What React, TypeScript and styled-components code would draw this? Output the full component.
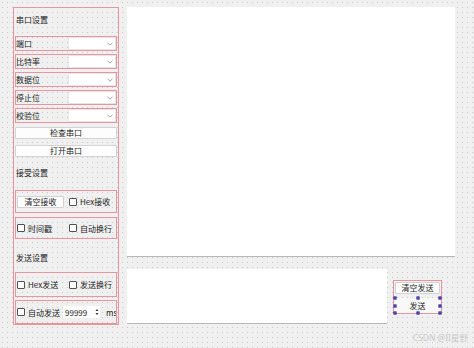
import React from 'react';
import styled, { createGlobalStyle } from 'styled-components';

const pink = '#e8959f';

const GlobalStyle = createGlobalStyle`
  html, body { margin: 0; padding: 0; }
  body {
    width: 474px;
    height: 348px;
    overflow: hidden;
    background-color: #f0f0f0;
    background-image: radial-gradient(circle, #c9c9c9 0.5px, transparent 0.8px);
    background-size: 5px 5px;
    background-position: 0 0;
    font-family: "Noto Sans CJK SC", "Noto Sans", sans-serif;
    font-size: 8px;
    color: #1c1c1c;
  }
`;

const Form = styled.div`
  position: relative;
  display: flex;
  gap: 8px;
  height: 348px;
  box-sizing: border-box;
  padding: 7px 0 0 13px;
`;

const Panel = styled.div`
  width: 106px;
  height: 318px;
  box-sizing: border-box;
  border: 1px solid ${pink};
  padding: 0 1px;
  display: flex;
  flex-direction: column;
`;

const SectionTitle = styled.div<{ $top: number }>`
  margin-top: ${p => p.$top}px;
  height: 12px;
  line-height: 12px;
  padding-left: 1px;
`;

const ComboRow = styled.div<{ $top: number }>`
  margin-top: ${p => p.$top}px;
  height: 15px;
  box-sizing: border-box;
  border: 1px solid ${pink};
  display: flex;
  align-items: stretch;
`;

const ComboLabel = styled.div`
  width: 52px;
  line-height: 13px;
`;

const ComboBox = styled.div`
  flex: 1;
  background: #fff;
  border: 1px solid #e6e6e6;
  display: flex;
  align-items: center;
  justify-content: flex-end;
  padding-right: 2px;
`;

const PushButton = styled.div<{ $top?: number; $w?: number; $h?: number }>`
  margin-top: ${p => p.$top ?? 0}px;
  ${p => (p.$w ? `width: ${p.$w}px;` : '')}
  height: ${p => p.$h ?? 12}px;
  box-sizing: border-box;
  background: #fdfdfd;
  border: 1px solid #d3d3d3;
  border-radius: 1px;
  display: flex;
  align-items: center;
  justify-content: center;
  line-height: 1;
`;

const OptionBox = styled.div<{ $top: number; $h: number }>`
  margin-top: ${p => p.$top}px;
  height: ${p => p.$h}px;
  box-sizing: border-box;
  border: 1px solid ${pink};
  display: grid;
  grid-template-columns: 52px 1fr;
  align-items: center;
  padding-left: 1px;
  overflow: hidden;
  white-space: nowrap;
`;

const CheckItem = styled.label`
  display: flex;
  align-items: center;
  gap: 3px;
`;

const CheckMark = styled.span`
  width: 8px;
  height: 8px;
  box-sizing: border-box;
  border: 1px solid #505050;
  border-radius: 1px;
  background: #fff;
`;

const SpinRow = styled.div`
  display: flex;
  align-items: center;
  gap: 6px;
`;

const SpinBox = styled.div`
  width: 37px;
  height: 12px;
  margin-left: -6px;
  box-sizing: border-box;
  background: #fff;
  display: flex;
  align-items: center;
  justify-content: space-between;
  padding: 0 1px 0 2px;
`;

const RightColumn = styled.div`
  width: 328px;
  display: flex;
  flex-direction: column;
`;

const TextArea = styled.div<{ $w?: number; $h: number }>`
  ${p => (p.$w ? `width: ${p.$w}px;` : '')}
  height: ${p => p.$h}px;
  background: #fff;
  box-shadow: 0 1px 0 #b8b8b8;
`;

const BottomRow = styled.div`
  margin-top: 13px;
  display: flex;
  gap: 6px;
  align-items: flex-start;
`;

const ButtonGroup = styled.div`
  margin-top: 11px;
  width: 49px;
  height: 34px;
  box-sizing: border-box;
  border: 1px solid ${pink};
  padding: 1px 1px 0;
  display: flex;
  flex-direction: column;
  gap: 4px;
`;

const Selected = styled.div`
  position: relative;
  height: 15px;
  display: flex;
  align-items: center;
  justify-content: center;
  background: #f8f8f8;
`;

const Handle = styled.span<{ $x: string; $y: string }>`
  position: absolute;
  left: ${p => p.$x};
  top: ${p => p.$y};
  width: 3px;
  height: 3px;
  box-sizing: border-box;
  transform: translate(-50%, -50%);
  background: #7c72dc;
  border: 0.5px solid #3a3596;
`;

const Watermark = styled.div`
  position: absolute;
  right: 6px;
  bottom: 5px;
  font-family: "Noto Sans", "Noto Sans CJK SC", sans-serif;
  font-size: 8.5px;
  color: #cacaca;
`;

const Chevron = () => (
  <svg width="6" height="4" viewBox="0 0 6 4">
    <path d="M0.5 0.8 L3 3.2 L5.5 0.8" fill="none" stroke="#8a8a8a" strokeWidth="0.8" />
  </svg>
);

const SpinArrows = () => (
  <svg width="4" height="8" viewBox="0 0 4 8">
    <path d="M0.5 3 L2 1 L3.5 3 Z" fill="#333" />
    <path d="M0.5 5 L2 7 L3.5 5 Z" fill="#333" />
  </svg>
);

const Check: React.FC<{ text: string }> = ({ text }) => (
  <CheckItem>
    <CheckMark />
    {text}
  </CheckItem>
);

const combos = ['端口', '比特率', '数据位', '停止位', '校验位'];

const handles: [string, string][] = [
  ['0%', '0%'], ['50%', '0%'], ['100%', '0%'],
  ['0%', '50%'], ['100%', '50%'],
  ['0%', '100%'], ['50%', '100%'], ['100%', '100%'],
];

export default function App() {
  return (
    <>
      <GlobalStyle />
      <Form>
        <Panel>
          <SectionTitle $top={6}>串口设置</SectionTitle>
          {combos.map((c, i) => (
            <ComboRow key={c} $top={i === 0 ? 10 : 3}>
              <ComboLabel>{c}</ComboLabel>
              <ComboBox>
                <Chevron />
              </ComboBox>
            </ComboRow>
          ))}
          <PushButton $top={4}>检查串口</PushButton>
          <PushButton $top={6}>打开串口</PushButton>

          <SectionTitle $top={10}>接受设置</SectionTitle>
          <OptionBox $top={11} $h={23}>
            <PushButton $w={47} $h={12}>清空接收</PushButton>
            <Check text="Hex接收" />
          </OptionBox>
          <OptionBox $top={4} $h={22}>
            <Check text="时间戳" />
            <Check text="自动换行" />
          </OptionBox>

          <SectionTitle $top={13}>发送设置</SectionTitle>
          <OptionBox $top={8} $h={25}>
            <Check text="Hex发送" />
            <Check text="发送换行" />
          </OptionBox>
          <OptionBox $top={3} $h={24}>
            <Check text="自动发送" />
            <SpinRow>
              <SpinBox>
                99999
                <SpinArrows />
              </SpinBox>
              ms
            </SpinRow>
          </OptionBox>
        </Panel>

        <RightColumn>
          <TextArea $h={249} />
          <BottomRow>
            <TextArea $w={260} $h={54} />
            <ButtonGroup>
              <PushButton $h={12}>清空发送</PushButton>
              <Selected>
                发送
                {handles.map(([x, y]) => (
                  <Handle key={x + y} $x={x} $y={y} />
                ))}
              </Selected>
            </ButtonGroup>
          </BottomRow>
        </RightColumn>
        <Watermark>CSDN @II星野</Watermark>
      </Form>
    </>
  );
}
